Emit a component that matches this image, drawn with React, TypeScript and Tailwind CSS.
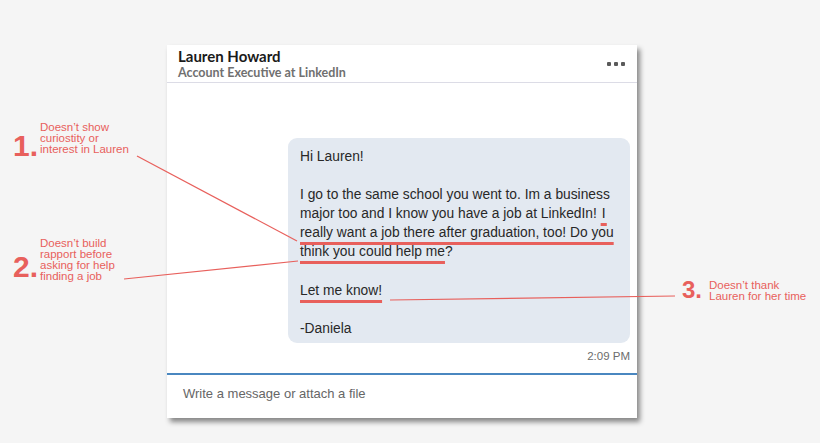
import React from 'react'

const RED = '#e8605c'

function Note({ num, lines, numClass }: { num: string; lines: string[]; numClass: string }) {
  return (
    <div className="flex items-end gap-[2px]">
      <span
        className={`font-bold leading-none text-[#e8605c] ${numClass}`}
        style={{ fontFamily: '"Liberation Sans", Arial, sans-serif' }}
      >
        {num}
      </span>
      <div className="text-[11.5px] leading-[11px] text-[#e8605c]" style={{ fontFamily: '"Liberation Sans", Arial, sans-serif' }}>
        {lines.map((l) => (
          <div key={l}>{l}</div>
        ))}
      </div>
    </div>
  )
}

export default function App() {
  const u = 'underline decoration-[#e8605c] decoration-[3px] underline-offset-[5px]'
  return (
    <div className="relative flex h-[443px] w-[820px] overflow-hidden bg-[#f5f5f5]">
      {/* left notes */}
      <div className="flex w-[167px] flex-col pl-[12px] pt-[122px]">
        <div className="flex">
          <div className="w-[26px] pt-[9px] text-right">
            <span className="text-[30px] font-bold leading-none text-[#e8605c]" style={{ fontFamily: '"Liberation Sans", Arial, sans-serif' }}>
              1.
            </span>
          </div>
          <div className="pl-[2px] text-[11.5px] leading-[11px] text-[#e8605c]" style={{ fontFamily: '"Liberation Sans", Arial, sans-serif' }}>
            <div>Doesn’t show</div>
            <div>curiostity or</div>
            <div>interest in Lauren</div>
          </div>
        </div>
        <div className="mt-[76px]">
          <Note num="2." numClass="w-[26px] text-right text-[30px]" lines={['Doesn’t build', 'rapport before', 'asking for help', 'finding a job']} />
        </div>
      </div>

      {/* card */}
      <div
        className="mt-[45px] flex h-[373px] w-[470px] flex-col bg-white shadow-[3px_4px_5px_rgba(0,0,0,0.45)]"
        style={{ fontFamily: '"Liberation Sans", Arial, sans-serif' }}
      >
        <div className="flex h-[38px] items-center justify-between border-b border-[#dcdce6] pl-[11px] pr-[12px]">
          <div style={{ fontFamily: 'Lato, sans-serif' }}>
            <div className="text-[15px] font-bold leading-[17px] text-[#1a1a1a]">Lauren Howard</div>
            <div className="text-[12.5px] font-bold leading-[15px] text-[#707070]">Account Executive at LinkedIn</div>
          </div>
          <div className="flex gap-[3px] pt-[1px]">
            <span className="h-[4px] w-[4px] rounded-[1px] bg-[#5a5a5a]" />
            <span className="h-[4px] w-[4px] rounded-[1px] bg-[#5a5a5a]" />
            <span className="h-[4px] w-[4px] rounded-[1px] bg-[#5a5a5a]" />
          </div>
        </div>

        <div className="flex flex-1 flex-col items-end pr-[7px] pt-[55px]">
          <div className="w-[342px] rounded-[9px] bg-[#e3e9f1] pb-[5px] pl-[12px] pr-[6px] pt-[9px] text-[13.8px] leading-[19px] text-[#282828]">
            <div>Hi Lauren!</div>
            <div>&nbsp;</div>
            <div>I go to the same school you went to. Im a business</div>
            <div className="whitespace-nowrap">
              major too and I know you have a job at LinkedIn! <span className={u}>&#8202;I&#8202;</span>
            </div>
            <div className="whitespace-nowrap">
              <span className={u}>really want a job there after graduation, too! Do you</span>
            </div>
            <div>
              <span className={u}>think you could help me</span>?
            </div>
            <div>&nbsp;</div>
            <div className="pt-[1px]">
              <span className={u}>Let me know!</span>
            </div>
            <div>&nbsp;</div>
            <div>-Daniela</div>
          </div>
          <div className="mt-[6px] text-[11.5px] leading-[14px] text-[#6d6d6d]">2:09 PM</div>
        </div>

        <div className="h-[45px] border-t-2 border-[#4a87c0] pl-[16px] pt-[9px] text-[13px] text-[#666]">
          Write a message or attach a file
        </div>
      </div>

      {/* right note */}
      <div className="flex-1 pl-[45px] pt-[278px]">
        <Note num="3." numClass="mr-[5px] text-[24px]" lines={['Doesn’t thank', 'Lauren for her time']} />
      </div>

      {/* connector lines */}
      <svg className="pointer-events-none absolute inset-0" width="820" height="443">
        <line x1="137" y1="156" x2="297" y2="241" stroke={RED} strokeWidth="1.2" />
        <line x1="124" y1="279" x2="298" y2="261" stroke={RED} strokeWidth="1.2" />
        <line x1="390" y1="300" x2="675" y2="296" stroke={RED} strokeWidth="1.2" />
      </svg>
    </div>
  )
}
